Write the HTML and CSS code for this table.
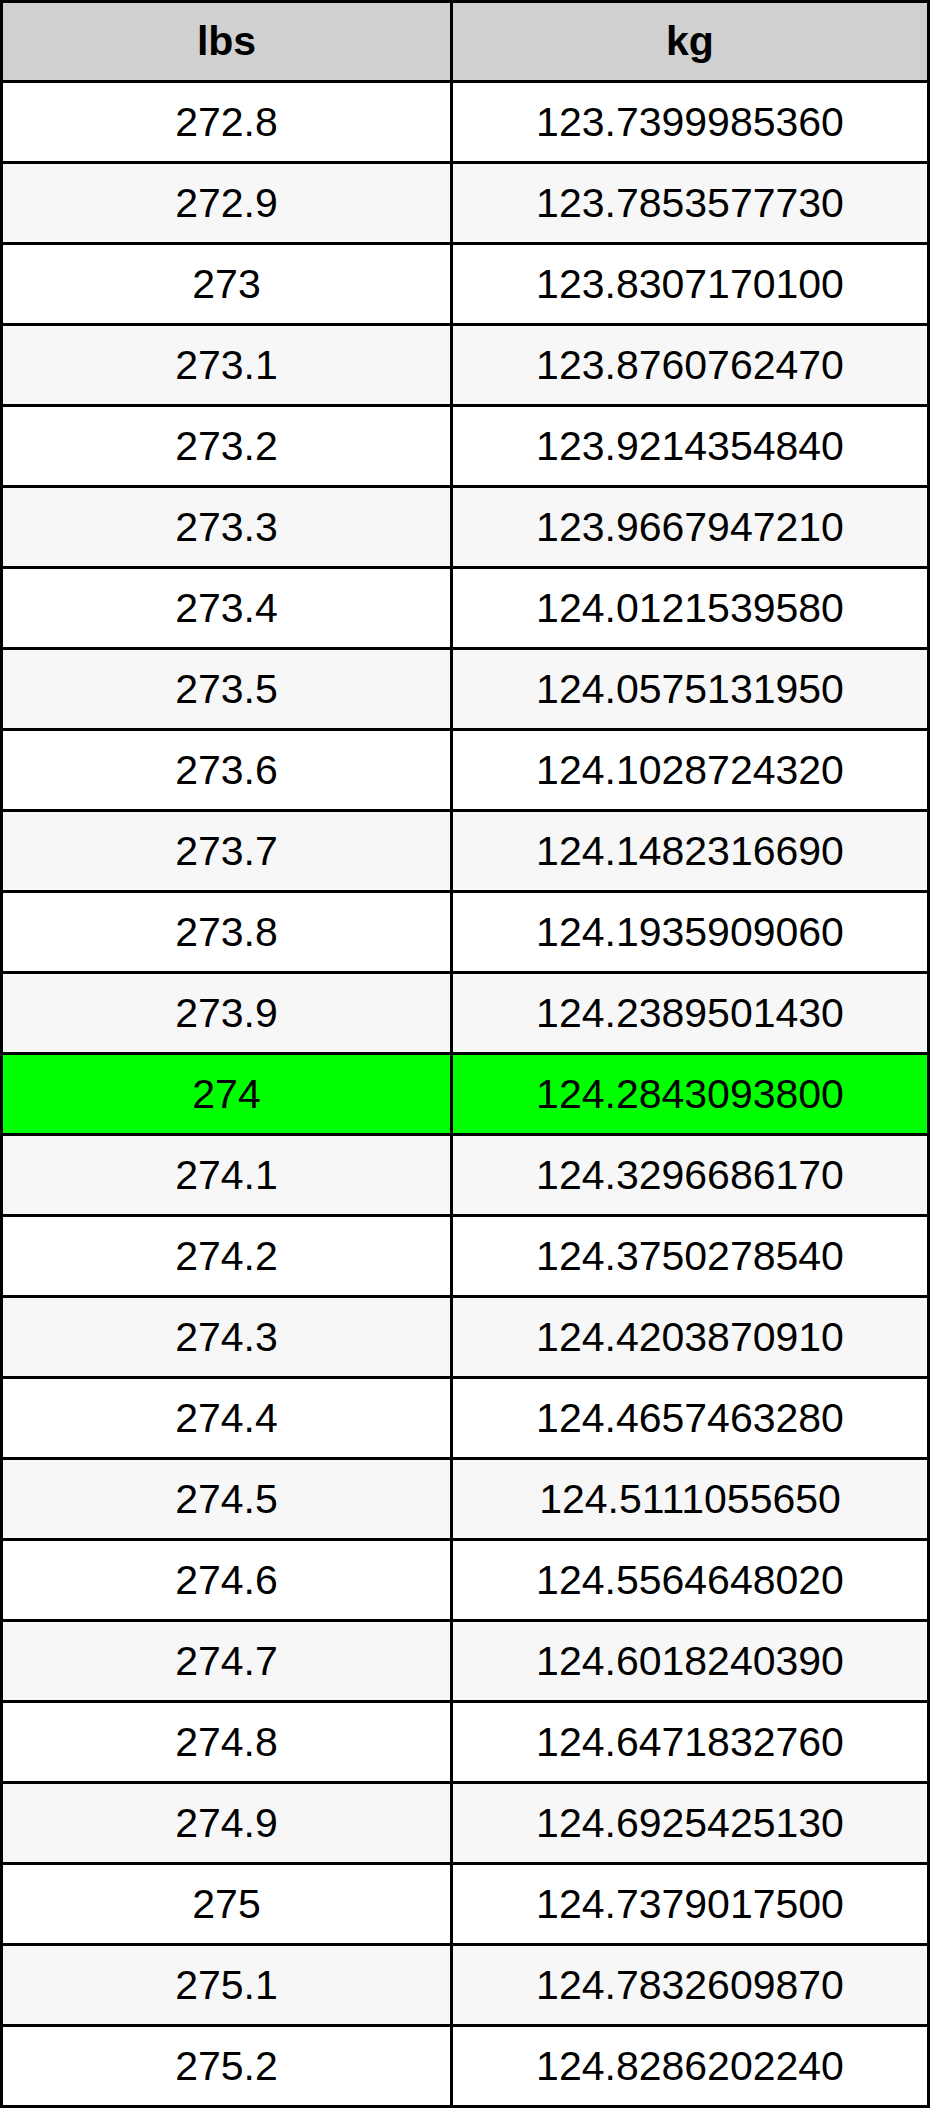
FILE: index.html
```html
<!DOCTYPE html>
<html>
<head>
<meta charset="utf-8">
<link rel="stylesheet" href="styles.css">
</head>
<body>
<table class="conv">
<thead>
<tr><th class="c1">lbs</th><th class="c2">kg</th></tr>
</thead>
<tbody>
<tr><td>272.8</td><td>123.7399985360</td></tr>
<tr><td>272.9</td><td>123.7853577730</td></tr>
<tr><td>273</td><td>123.8307170100</td></tr>
<tr><td>273.1</td><td>123.8760762470</td></tr>
<tr><td>273.2</td><td>123.9214354840</td></tr>
<tr><td>273.3</td><td>123.9667947210</td></tr>
<tr><td>273.4</td><td>124.0121539580</td></tr>
<tr><td>273.5</td><td>124.0575131950</td></tr>
<tr><td>273.6</td><td>124.1028724320</td></tr>
<tr><td>273.7</td><td>124.1482316690</td></tr>
<tr><td>273.8</td><td>124.1935909060</td></tr>
<tr><td>273.9</td><td>124.2389501430</td></tr>
<tr class="hl"><td>274</td><td>124.2843093800</td></tr>
<tr><td>274.1</td><td>124.3296686170</td></tr>
<tr><td>274.2</td><td>124.3750278540</td></tr>
<tr><td>274.3</td><td>124.4203870910</td></tr>
<tr><td>274.4</td><td>124.4657463280</td></tr>
<tr><td>274.5</td><td>124.5111055650</td></tr>
<tr><td>274.6</td><td>124.5564648020</td></tr>
<tr><td>274.7</td><td>124.6018240390</td></tr>
<tr><td>274.8</td><td>124.6471832760</td></tr>
<tr><td>274.9</td><td>124.6925425130</td></tr>
<tr><td>275</td><td>124.7379017500</td></tr>
<tr><td>275.1</td><td>124.7832609870</td></tr>
<tr><td>275.2</td><td>124.8286202240</td></tr>
</tbody>
</table>
</body>
</html>
```
FILE: styles.css
```css
html, body {
  margin: 0;
  padding: 0;
  background: #ffffff;
}
.conv {
  width: 930px;
  table-layout: fixed;
  border-collapse: separate;
  border-spacing: 0;
  border-left: 3px solid #000;
  border-top: 3px solid #000;
  font-family: "Liberation Sans", Arial, sans-serif;
  font-size: 41px;
  color: #000;
}
.conv th,
.conv td {
  box-sizing: border-box;
  padding: 0;
  border-right: 3px solid #000;
  border-bottom: 3px solid #000;
  text-align: center;
  vertical-align: middle;
  line-height: 1;
}
.conv th {
  height: 80px;
  background: #d0d0d0;
  font-weight: bold;
}
.conv th.c1 {
  width: 450px;
}
.conv td {
  height: 81px;
}
.conv tbody tr:nth-child(even) td {
  background: #f7f7f7;
}
.conv tbody tr.hl td {
  background: #00ff00;
}
```
